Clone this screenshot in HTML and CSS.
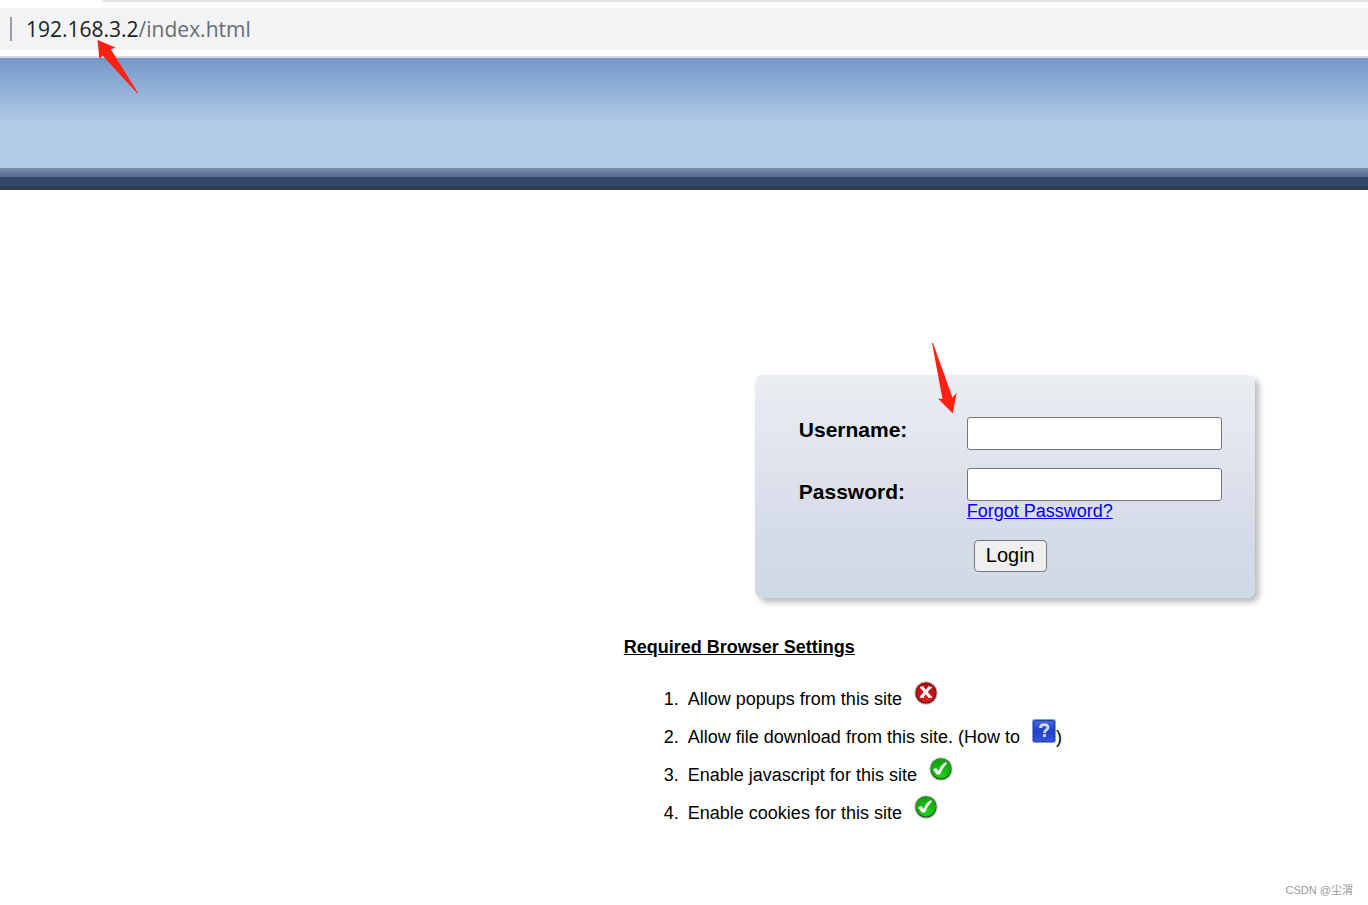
FILE: index.html
```html
<!DOCTYPE html>
<html lang="en">
  <head>
    <meta charset="UTF-8" />
    <meta name="viewport" content="width=device-width, initial-scale=1.0" />
    <title>Login</title>

    <link rel="stylesheet" href="styles.css">
  </head>
  <body>
    <div class="toolbar">
      <div class="tabstrip"></div>
      <div class="address">
        <span class="host">192.168.3.2</span><span class="path">/index.html</span>
      </div>
    </div>

    <header class="banner">
      <div class="banner-edge"></div>
      <div class="banner-bar"></div>
    </header>

    <main>
      <form class="login">
        <label for="username">Username:</label>
        <div class="field">
          <input type="text" id="username" name="username" />
        </div>
        <label for="password" class="password-label">Password:</label>
        <div class="field">
          <input type="password" id="password" name="password" />
          <a href="#">Forgot Password?</a>
        </div>
        <button type="submit">Login</button>
      </form>

      <section class="settings">
        <h2>Required Browser Settings</h2>
        <ol>
          <li>Allow popups from this site
            <svg class="icon" viewBox="0 0 24 24">
              <circle cx="12" cy="12" r="11.5" fill="#b9aaaa" />
              <circle cx="12" cy="12" r="10.5" fill="#4c1111" />
              <circle cx="12" cy="11.5" r="10" fill="url(#red)" />
              <path d="M7.500 6l8.500 10M16 6l-8.500 10" stroke="#fff" stroke-width="3" />
              <path d="M6 6.500h4M14 6.500h4M6 16h4M14 16h4" stroke="#fff" stroke-width="1.500" />
            </svg>
          </li>
          <li>Allow file download from this site. (How to
            <svg class="icon" viewBox="0 0 24 24">
              <rect x="0" y="0" width="24" height="24" rx="3" fill="#8c9ce0" />
              <rect x="1" y="1" width="22" height="22" rx="2" fill="#1d3fae" />
              <rect x="2" y="2" width="20" height="20" rx="1" fill="url(#blue)" />
              <path d="M8.500 9c0-4.500 7.500-4.500 7.500-.5c0 2.500-3.500 2.500-3.500 5.500" fill="none" stroke="#d3d7e6" stroke-width="2.800" />
              <rect x="11" y="15" width="3" height="3" fill="#d3d7e6" />
            </svg>)</li>
          <li>Enable javascript for this site
            <svg class="icon" viewBox="0 0 24 24">
              <circle cx="12" cy="12" r="11.5" fill="#acbaaa" />
              <circle cx="12" cy="12" r="10.5" fill="#164b12" />
              <circle cx="12" cy="11.5" r="10" fill="url(#green)" />
              <path d="M4 12.500l3-1.500 2.500 3c2-4.500 4-7 7.500-9l1 1.500c-3 3-5 6-7 11h-3z" fill="#fff" />
            </svg>
          </li>
          <li>Enable cookies for this site
            <svg class="icon" viewBox="0 0 24 24">
              <circle cx="12" cy="12" r="11.5" fill="#acbaaa" />
              <circle cx="12" cy="12" r="10.5" fill="#164b12" />
              <circle cx="12" cy="11.5" r="10" fill="url(#green)" />
              <path d="M4 12.500l3-1.500 2.500 3c2-4.500 4-7 7.500-9l1 1.500c-3 3-5 6-7 11h-3z" fill="#fff" />
            </svg>
          </li>
        </ol>
      </section>
    </main>

    <!-- arrows on top of the page -->
    <svg class="arrow arrow-address" viewBox="0 0 42 54">
      <path d="M1.500 0L19.500 7.500L15 9.500L42 53H41L6.500 15.500L3.500 19.500z" fill="#ff2010" />
    </svg>
    <svg class="arrow arrow-username" viewBox="0 0 26 72">
      <path d="M1 1H2L21.500 55.500L25.700 51L21.700 71.500L7 56.500L11.500 57z" fill="#ff2010" />
    </svg>

    <div class="watermark">CSDN @尘渭</div>

    <svg class="gradients">
      <radialGradient id="red" cx=".5" cy=".8" r=".8">
        <stop offset="0" stop-color="#e81c1c" />
        <stop offset="1" stop-color="#a90d0d" />
      </radialGradient>
      <radialGradient id="green" cx=".5" cy=".8" r=".8">
        <stop offset="0" stop-color="#1ed316" />
        <stop offset="1" stop-color="#139b10" />
      </radialGradient>
      <linearGradient id="blue" x1="0" y1="0" x2="0" y2="1">
        <stop offset="0" stop-color="#4169db" />
        <stop offset=".5" stop-color="#1f40c8" />
        <stop offset="1" stop-color="#3155e2" />
      </linearGradient>
    </svg>
  </body>
</html>
```

FILE: styles.css
```css
* {
  box-sizing: border-box;
}

body {
  position: relative;
  min-height: 100vh;
  margin: 0;
  background-color: white;
  color: black;
  font-family: "Liberation Sans", Arial, sans-serif;
  font-size: 18px;
  line-height: 20px;
}

/* address bar */
.toolbar {
  padding-bottom: 6px;
  border-bottom: 2px solid #dadbdc;
}

.tabstrip {
  height: 2px;
  margin: 0 0 6px 102px;
  background-color: #dee1e6;
  border-bottom-left-radius: 4px;
}

.address {
  display: flex;
  align-items: center;
  height: 42px;
  padding-left: 10px;
  background-color: #f1f3f4;
  font-family: "Open Sans", sans-serif;
  font-size: 21px;
  line-height: 24px;
}

.host {
  padding-left: 14px;
  border-left: 2px solid #9b9da0;
  color: #202124;
}

.path {
  color: #6a6d71;
}

/* banner */
.banner {
  padding-top: 110px;
  background: linear-gradient(#7598c8, #b2cce8 66px);
}

.banner-edge {
  height: 9px;
  background: linear-gradient(#7e8ca6, #546a90);
}

.banner-bar {
  height: 13px;
  background-color: #344968;
  border-bottom: 4px solid #2d3d59;
}

main {
  padding: 185px 0 60px 45.6%;
}

/* login */
.login {
  display: grid;
  grid-template-columns: 168px 255px;
  row-gap: 18px;
  width: 500px;
  margin-left: 131px;
  padding: 42px 33px 26px 44px;
  border-radius: 8px;
  background: linear-gradient(#eaeef2, #dfe3ed 40%, #d5dbe8 70%, #ced9e5);
  box-shadow: 4px 4px 6px #b8b8b8;
}

.login label {
  font-size: 21px;
  font-weight: bold;
  line-height: 26px;
}

.login .password-label {
  padding-top: 11px;
}

.field input {
  display: block;
  width: 100%;
  height: 33px;
  padding: 2px 6px;
  border: 1px solid #767676;
  border-radius: 3px;
  background-color: white;
  font-size: 20px;
}

.field a {
  display: block;
  color: #0000ee;
  line-height: 21px;
}

button {
  grid-column: 2;
  justify-self: start;
  height: 32px;
  margin-left: 7px;
  padding: 0 11px 2px;
  border: 1px solid #767676;
  border-radius: 4px;
  background-color: #efefef;
  color: black;
  font-family: inherit;
  font-size: 20px;
}

/* settings */
.settings h2 {
  margin: 39px 0 24px;
  font-size: 18px;
  line-height: 20px;
  text-decoration: underline;
}

.settings ol {
  margin: 0;
  padding-left: 60px;
}

.settings li {
  height: 38px;
  padding-left: 4px;
}

.icon {
  width: 24px;
  height: 24px;
  margin-left: 7px;
}

.arrow {
  position: absolute;
}

.arrow-address {
  top: 40px;
  left: 96px;
  width: 42px;
  height: 54px;
}

.arrow-username {
  top: 342px;
  left: 931px;
  width: 26px;
  height: 72px;
}

.watermark {
  position: absolute;
  right: 15px;
  bottom: 5px;
  color: #999;
  font-family: "Liberation Sans", "Noto Sans CJK SC", sans-serif;
  font-size: 11px;
}

.gradients {
  position: absolute;
  width: 0;
  height: 0;
}
```
